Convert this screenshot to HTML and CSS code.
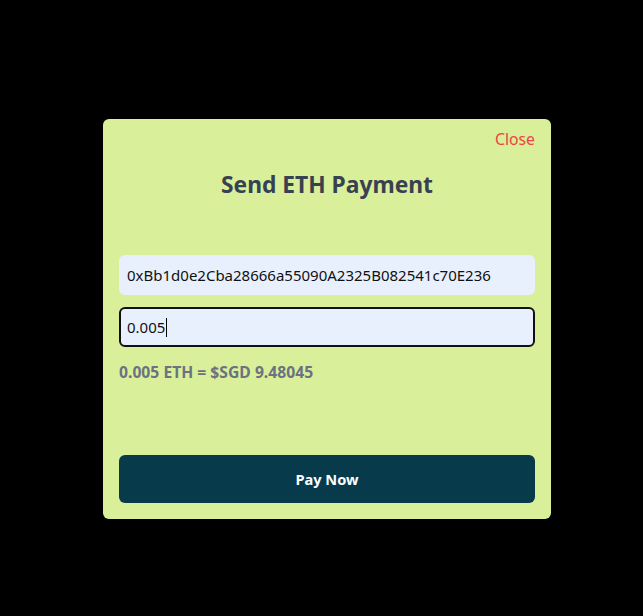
FILE: index.html
```html
<!DOCTYPE html>
<html>
<head>
<meta charset="utf-8">
<link rel="stylesheet" href="styles.css">
</head>
<body>
<div class="modal">
  <div class="top"><span class="close">Close</span></div>
  <h2 class="title">Send ETH Payment</h2>
  <div class="field">0xBb1d0e2Cba28666a55090A2325B082541c70E236</div>
  <div class="field focus"><span>0.005</span><span class="caret"></span></div>
  <div class="conv">0.005 ETH = $SGD 9.48045</div>
  <button class="pay">Pay Now</button>
</div>
</body>
</html>
```
FILE: styles.css
```css
html, body { margin: 0; background: #000; }
body {
  padding: 119px 0 0 103px;
  font-family: "Noto Sans", "Open Sans", sans-serif;
  height: 616px;
  box-sizing: border-box;
}
.modal {
  width: 448px;
  height: 400px;
  box-sizing: border-box;
  background: #d9ef9a;
  border-radius: 6px;
  padding: 10px 16px 16px 16px;
  display: flex;
  flex-direction: column;
}
.top { display: flex; justify-content: flex-end; height: 20px; }
.close { color: #ef4444; font-size: 15.8px; line-height: 20px; }
.title {
  margin: 22px 0 0 0;
  text-align: center;
  color: #374151;
  font-size: 22.8px;
  font-weight: 700;
  line-height: 28px;
}
.field {
  margin-top: 56px;
  height: 40px;
  box-sizing: border-box;
  background: #e8f0fe;
  border-radius: 6px;
  padding: 0 8px;
  font-size: 15px;
  color: #111;
  display: flex;
  align-items: center;
}
.field.focus {
  margin-top: 12px;
  border: 2px solid #111;
  padding: 0 6px;
}
.caret { width: 1px; height: 19px; background: #000; margin-left: 1px; }
.conv {
  margin-top: 15px;
  color: #6b7280;
  font-weight: 700;
  font-size: 15.7px;
  line-height: 20px;
}
.pay {
  margin-top: auto;
  height: 48px;
  border: 0;
  border-radius: 6px;
  background: #073b4c;
  color: #fff;
  font-family: inherit;
  font-weight: 700;
  font-size: 14.6px;
}
```
